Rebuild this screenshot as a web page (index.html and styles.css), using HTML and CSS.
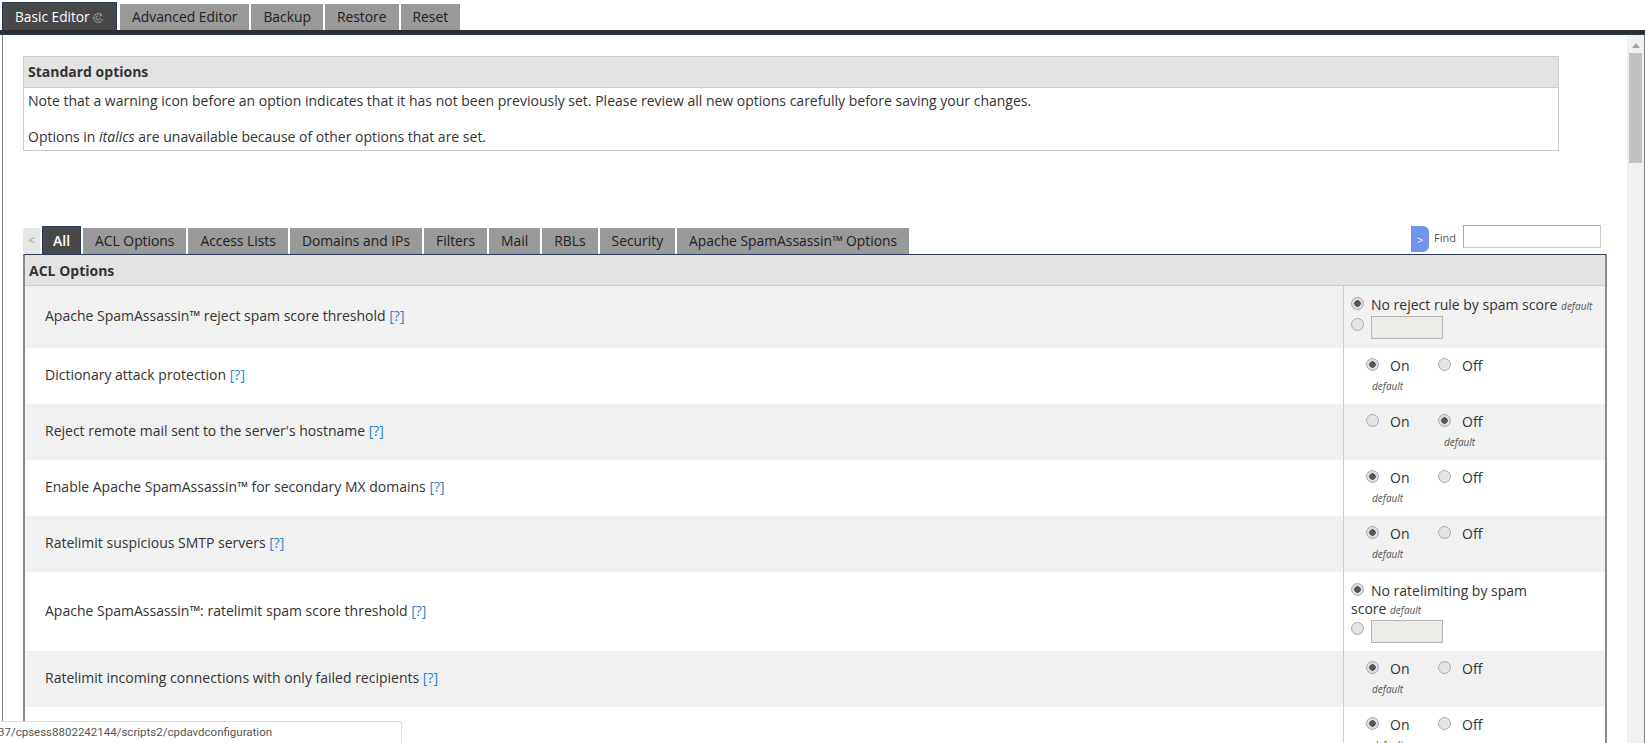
FILE: index.html
```html
<!DOCTYPE html>
<html lang="en">
<head>
<meta charset="utf-8">
<title>Exim Configuration Manager</title>
<link rel="stylesheet" href="styles.css">
</head>
<body>
<nav class="top-tabs">
  <a class="top-tab active">Basic Editor
    <svg class="refresh" viewBox="0 0 12 12" width="12" height="12"><path d="M9.5 3.2A4.4 4.4 0 1 0 10.4 7M8 1.6l1.6 1.6-1.9 1M8 6A2 2 0 1 1 6 4" fill="none" stroke="#ccc" stroke-width="1" stroke-dasharray="1.4 .5"/></svg>
  </a>
  <a class="top-tab">Advanced Editor</a>
  <a class="top-tab">Backup</a>
  <a class="top-tab">Restore</a>
  <a class="top-tab">Reset</a>
</nav>
<div class="top-rule"></div>
<div class="page">
  <main class="content">
    <section class="notice">
      <h2 class="notice-head">Standard options</h2>
      <div class="notice-body">
        <p>Note that a warning icon before an option indicates that it has not been previously set. Please review all new options carefully before saving your changes.</p>
        <p>Options in <em>italics</em> are unavailable because of other options that are set.</p>
      </div>
    </section>
    <div class="tabbar">
      <a class="prev">&lt;</a>
      <a class="tab active">All</a>
      <a class="tab">ACL Options</a>
      <a class="tab">Access Lists</a>
      <a class="tab">Domains and IPs</a>
      <a class="tab">Filters</a>
      <a class="tab">Mail</a>
      <a class="tab">RBLs</a>
      <a class="tab">Security</a>
      <a class="tab">Apache SpamAssassin™ Options</a>
      <div class="find">
        <a class="next">&gt;</a>
        <label class="find-label" for="find">Find</label>
        <input class="find-input" id="find" type="text">
      </div>
    </div>
    <section class="options">
      <h3 class="options-head">ACL Options</h3>

      <div class="row tall">
        <div class="name"><span>Apache SpamAssassin™ reject spam score threshold <a class="help">[?]</a></span></div>
        <div class="val stack">
          <label class="line"><input type="radio" name="a" checked>No reject rule by spam score <i class="def">default</i></label>
          <label class="line"><input type="radio" name="a"><span class="field"></span></label>
        </div>
      </div>

      <div class="row">
        <div class="name"><span>Dictionary attack protection <a class="help">[?]</a></span></div>
        <div class="val onoff">
          <div class="opt"><label><input type="radio" name="b" checked>On</label><i class="def">default</i></div>
          <div class="opt"><label><input type="radio" name="b">Off</label></div>
        </div>
      </div>

      <div class="row">
        <div class="name"><span>Reject remote mail sent to the server's hostname <a class="help">[?]</a></span></div>
        <div class="val onoff">
          <div class="opt"><label><input type="radio" name="c">On</label></div>
          <div class="opt"><label><input type="radio" name="c" checked>Off</label><i class="def">default</i></div>
        </div>
      </div>

      <div class="row">
        <div class="name"><span>Enable Apache SpamAssassin™ for secondary MX domains <a class="help">[?]</a></span></div>
        <div class="val onoff">
          <div class="opt"><label><input type="radio" name="d" checked>On</label><i class="def">default</i></div>
          <div class="opt"><label><input type="radio" name="d">Off</label></div>
        </div>
      </div>

      <div class="row">
        <div class="name"><span>Ratelimit suspicious SMTP servers <a class="help">[?]</a></span></div>
        <div class="val onoff">
          <div class="opt"><label><input type="radio" name="e" checked>On</label><i class="def">default</i></div>
          <div class="opt"><label><input type="radio" name="e">Off</label></div>
        </div>
      </div>

      <div class="row taller">
        <div class="name"><span>Apache SpamAssassin™: ratelimit spam score threshold <a class="help">[?]</a></span></div>
        <div class="val stack">
          <label class="line"><input type="radio" name="f" checked>No ratelimiting by spam<br>score <i class="def">default</i></label>
          <label class="line"><input type="radio" name="f"><span class="field"></span></label>
        </div>
      </div>

      <div class="row">
        <div class="name"><span>Ratelimit incoming connections with only failed recipients <a class="help">[?]</a></span></div>
        <div class="val onoff">
          <div class="opt"><label><input type="radio" name="g" checked>On</label><i class="def">default</i></div>
          <div class="opt"><label><input type="radio" name="g">Off</label></div>
        </div>
      </div>

      <div class="row">
        <div class="name"></div>
        <div class="val onoff">
          <div class="opt"><label><input type="radio" name="h" checked>On</label><i class="def">default</i></div>
          <div class="opt"><label><input type="radio" name="h">Off</label></div>
        </div>
      </div>
    </section>
  </main>
  <aside class="scrollbar">
    <span class="arrow"></span>
    <span class="thumb"></span>
  </aside>
</div>
<div class="status"><span>37/cpsess8802242144/scripts2/cpdavdconfiguration</span></div>
</body>
</html>
```
FILE: styles.css
```css
* { box-sizing: border-box; }
html, body { height: 743px; overflow: hidden; }
body {
  margin: 0;
  background: #fff;
  color: #333;
  font: 14px/20px "Open Sans", sans-serif;
}
a { text-decoration: none; }
h2, h3, p { margin: 0; }

.top-tabs {
  display: flex;
  align-items: flex-end;
  gap: 2px;
  height: 30px;
  padding-left: 2px;
}
.top-tab {
  display: block;
  height: 26px;
  padding: 3px 12px 0;
  background: #999;
  color: #222;
  font-size: 13.85px;
  white-space: nowrap;
}
.top-tab.active {
  height: 28px;
  margin-right: 1px;
  padding: 4px 0 0 12px;
  width: 115px;
  background: #484848;
  color: #fff;
  font-size: 13.7px;
  border: 1px solid #2b3a5c;
  border-bottom: 0;
}
.refresh { margin-left: -1px; vertical-align: -2px; }
.top-rule {
  height: 5px;
  background: #2e2e2e;
  border-bottom: 1px solid #2b3a5c;
}

.page {
  display: flex;
  height: 708px;
  margin-left: 2px;
}
.content {
  flex: 1;
  padding: 21px 20px 0 20px;
  border-left: 1px solid #808080;
  min-width: 0;
}

.notice {
  width: 1536px;
  height: 95px;
  border: 1px solid #ccc;
}
.notice-head {
  height: 31px;
  padding: 5px 4px 0;
  background: #e3e3e3;
  border-bottom: 1px solid #ccc;
  font-size: 14px;
  font-weight: 700;
  line-height: 20px;
}
.notice-body { padding: 3px 4px 0; }
.notice-body p { margin-bottom: 16px; line-height: 20px; }

.tabbar {
  display: flex;
  align-items: flex-end;
  gap: 2px;
  height: 28px;
  margin-top: 75px;
}
.prev {
  display: block;
  width: 17px;
  height: 26px;
  border-radius: 4px 0 0 4px;
  background: #e6e6e6;
  color: #999;
  font-size: 11px;
  line-height: 24px;
  text-align: center;
}
.tab {
  display: block;
  height: 26px;
  padding: 3px 12px 0;
  background: #999;
  color: #222;
  font-size: 13.85px;
  white-space: nowrap;
}
.tab.active {
  height: 28px;
  padding: 4px 10px 0;
  background: #484848;
  color: #fff;
  font-size: 14px;
  font-weight: 600;
  border: 1px solid #2b3a5c;
  border-bottom: 0;
}
.find {
  display: flex;
  align-items: flex-start;
  height: 28px;
  margin-left: auto;
  margin-right: 6px;
}
.next {
  display: block;
  width: 18px;
  height: 26px;
  margin-right: 5px;
  border-radius: 0 6px 6px 0;
  background: #7195ee;
  color: #fff;
  font-size: 11px;
  line-height: 28px;
  text-align: center;
}
.find-label {
  margin-right: 7px;
  font-size: 11px;
  line-height: 24px;
  color: #555;
}
.find-input {
  width: 138px;
  height: 23px;
  margin: -1px 0 0;
  padding: 0;
  border: 1px solid #aaa;
  border-right-color: #ccc;
  border-bottom-color: #ccc;
  background: #fff;
}

.options {
  width: 1584px;
  border-top: 1px solid #2b3a5c;
  border-left: 2px solid #8a8a8a;
  border-right: 2px solid #8a8a8a;
}
.options-head {
  height: 31px;
  padding: 6px 4px 0;
  background: #e3e3e3;
  border-bottom: 1px solid #ccc;
  font-size: 14px;
  font-weight: 700;
  line-height: 20px;
}
.row {
  display: grid;
  grid-template-columns: 1318px 1fr;
  height: 56px;
}
.row:nth-of-type(odd) { background: #f1f1f1; }
.row:nth-of-type(even) { background: #fff; }
.row.tall { height: 62px; }
.row.taller { height: 79px; }
.name {
  display: flex;
  align-items: center;
  padding: 0 0 2px 20px;
}
.help { color: #2a84c9; }
.val { border-left: 1px solid #ccc; }
.stack { padding: 10px 0 0 7px; }
.line { display: block; line-height: 18px; }
.onoff {
  display: flex;
  padding: 6px 0 0 22px;
}
.opt { width: 72px; }
.opt label { display: block; line-height: 24px; }
.opt .def { display: block; margin-top: -1px; padding-left: 6px; line-height: 18px; }
.def { font-size: 10px; font-style: italic; color: #555; }

input[type="radio"] {
  appearance: none;
  width: 13px;
  height: 13px;
  margin: 0;
  border: 1px solid #aaa;
  border-radius: 50%;
  background: #e4e4e4;
}
input[type="radio"]:checked {
  background: radial-gradient(circle, #555 0 3px, #ddd 3.5px);
}
.line input { margin-right: 7px; vertical-align: 0; }
.opt input { margin-right: 11px; vertical-align: 0; }
.field {
  display: inline-block;
  width: 72px;
  height: 23px;
  margin-top: 1px;
  border: 1px solid #b4b4b4;
  background: #ecebe6;
  vertical-align: middle;
}

.scrollbar {
  position: relative;
  flex: none;
  width: 18px;
  background: #f1f1f1;
  border-right: 1px solid #808080;
  padding: 8px 2px 0;
}
.arrow {
  display: block;
  width: 0;
  height: 0;
  margin: 0 auto 5px;
  border: 4px solid transparent;
  border-top: 0;
  border-bottom: 5px solid #a3a3a3;
}
.thumb {
  display: block;
  height: 110px;
  background: #c1c1c1;
}

.status {
  position: absolute;
  left: 0;
  bottom: 0;
  width: 402px;
  height: 22px;
  overflow: hidden;
  background: #fff;
  border: 1px solid #ddd;
  border-width: 1px 1px 0 0;
  border-radius: 0 3px 0 0;
  color: #555;
  font-family: Roboto, sans-serif;
  font-size: 11.5px;
  line-height: 21px;
  white-space: nowrap;
}
.status span { display: block; margin-left: -2px; }
```
